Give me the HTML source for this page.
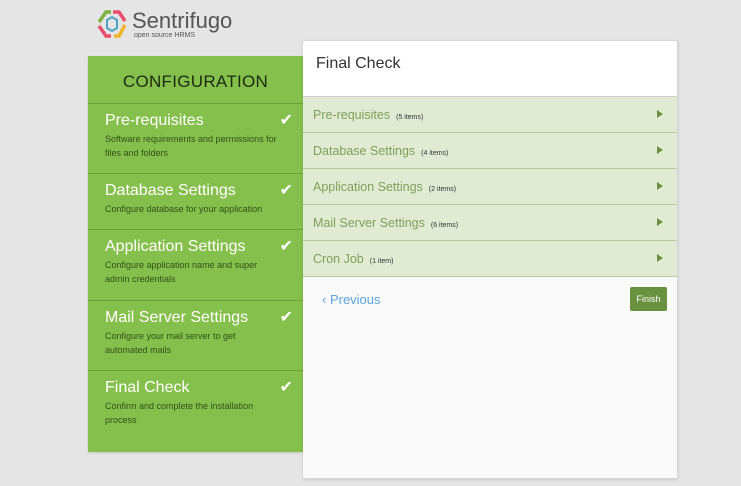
<!DOCTYPE html>
<html><head><style>
body{margin:0;width:741px;height:486px;background:#e5e5e5;font-family:"Liberation Sans",sans-serif;position:relative;overflow:hidden}
.logo{position:absolute;left:96px;top:8px}
.left{position:absolute;left:88px;top:56px;width:215px;height:396px;background:#86c04c;box-shadow:0 1px 2px rgba(0,0,0,.15)}
.left h2{margin:0;height:47px;line-height:52px;text-align:center;font-weight:normal;font-size:17px;color:#1a2a10;letter-spacing:.3px;border-bottom:1px solid #6e9f3c}
.it{position:absolute;left:0;width:215px;border-bottom:1px solid #6e9f3c;color:#fff}
.it b{display:block;font-weight:normal;font-size:16px;margin:8px 0 0 17px}
.it span{display:block;font-size:9px;line-height:14px;margin:2px 0 0 17px;color:#2f5018;width:175px}
.it i{position:absolute;right:10px;top:6px;font-style:normal;font-size:16px;color:#fff}
.right{position:absolute;left:303px;top:40px;width:374px;height:437px;background:#f9f9f9;border:1px solid #d6d6d6;border-left:none;box-shadow:0 1px 3px rgba(0,0,0,.12)}
.right h1{margin:0;height:55px;line-height:46px;font-weight:normal;font-size:16px;color:#333;padding-left:13px;border-bottom:1px solid #ccc;background:#fff}
.row{height:35px;border-bottom:1px solid #b7c99c;background:#e1ebd3;position:relative;color:#7f9f58;font-size:12.5px;line-height:36px;padding-left:10px}
.row small{font-size:7px;color:#333;margin-left:6px}
.row .ar{position:absolute right:14px;position:absolute;right:14px;top:13px;width:0;height:0;border-left:6px solid #6e9340;border-top:4px solid transparent;border-bottom:4px solid transparent}
.prev{position:absolute;left:19px;top:251px;color:#5aa5dd;font-size:13px}
.fin{position:absolute;left:327px;top:246px;width:37px;height:24px;background:#6a9140;color:#fff;font-size:9px;line-height:24px;text-align:center;border-radius:2px}
</style></head><body>
<div class="logo">
<svg width="32" height="32" viewBox="0 0 32 32"><path d="M3 14 L10 4 L15 4" stroke="#7bb33f" stroke-width="3.5" fill="none"/><path d="M17 4 L23 4 L29 13" stroke="#e94d6b" stroke-width="3.5" fill="none"/><path d="M29 17 L23 28 L18 28" stroke="#f0b429" stroke-width="3.5" fill="none"/><path d="M3 18 L10 28 L15 28" stroke="#e94d6b" stroke-width="3.5" fill="none"/><path d="M11 12 L16 9 L21 12 L21 20 L16 23 L11 20Z" stroke="#4fa3c7" stroke-width="2" fill="none"/></svg>
<span style="position:absolute;left:36px;top:0px;font-size:22px;color:#555;white-space:nowrap">Sentrifugo</span>
<span style="position:absolute;left:38px;top:24px;font-size:7px;color:#555;white-space:nowrap">open source HRMS</span>
</div>
<div class="left">
<h2>CONFIGURATION</h2>
<div class="it" style="top:48px;height:69px"><b>Pre-requisites</b><span>Software requirements and permissions for files and folders</span><i>✔</i></div>
<div class="it" style="top:118px;height:55px"><b>Database Settings</b><span>Configure database for your application</span><i>✔</i></div>
<div class="it" style="top:174px;height:70px"><b>Application Settings</b><span>Configure application name and super admin credentials</span><i>✔</i></div>
<div class="it" style="top:245px;height:69px"><b>Mail Server Settings</b><span>Configure your mail server to get automated mails</span><i>✔</i></div>
<div class="it" style="top:315px;height:70px;border:none"><b>Final Check</b><span>Confirm and complete the installation process</span><i>✔</i></div>
</div>
<div class="right">
<h1>Final Check</h1>
<div class="row">Pre-requisites<small>(5 items)</small><div class="ar"></div></div>
<div class="row">Database Settings<small>(4 items)</small><div class="ar"></div></div>
<div class="row">Application Settings<small>(2 items)</small><div class="ar"></div></div>
<div class="row">Mail Server Settings<small>(6 items)</small><div class="ar"></div></div>
<div class="row">Cron Job<small>(1 item)</small><div class="ar"></div></div>
<div class="prev">‹ Previous</div>
<div class="fin">Finish</div>
</div>
</body></html>
